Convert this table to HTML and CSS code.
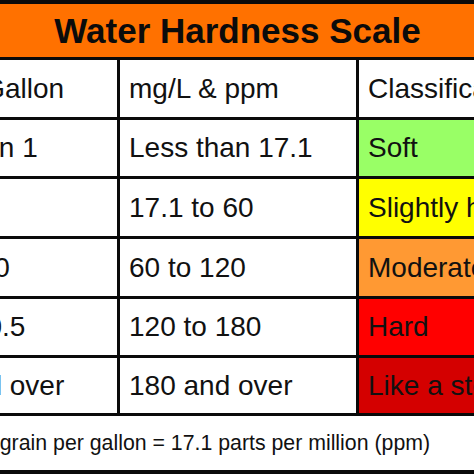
FILE: index.html
```html
<!DOCTYPE html>
<html lang="en">
<head>
<meta charset="UTF-8">
<meta name="viewport" content="width=device-width, initial-scale=1.0">
<title>Water Hardness Scale</title>
<link rel="stylesheet" href="styles.css">
</head>
<body>

<div class="sheet">
  <div class="title">Water Hardness Scale</div>

  <div class="cell first">Grains/Gallon</div>
  <div class="cell">mg/L &amp; ppm</div>
  <div class="cell">Classification</div>

  <div class="cell first">Less than 1</div>
  <div class="cell">Less than 17.1</div>
  <div class="cell soft">Soft</div>

  <div class="cell first">1 to 3.5</div>
  <div class="cell">17.1 to 60</div>
  <div class="cell slight">Slightly hard</div>

  <div class="cell first">3.5 to 7.0</div>
  <div class="cell">60 to 120</div>
  <div class="cell moderate">Moderately hard</div>

  <div class="cell first">7.0 to 10.5</div>
  <div class="cell">120 to 180</div>
  <div class="cell hard">Hard</div>

  <div class="cell first">10.5 and over</div>
  <div class="cell">180 and over</div>
  <div class="cell stone">Like a stone</div>

  <div class="note">1 grain per gallon = 17.1 parts per million (ppm)</div>
</div>

</body>
</html>
```

FILE: styles.css
```css
html, body {
  margin: 0;
  height: 100%;
  overflow: hidden;
  background: #fff;
}

body {
  font-family: "Liberation Sans", Arial, Helvetica, sans-serif;
  color: #000;
}

.sheet {
  display: grid;
  grid-template-columns: 237px 236px 236px;
  grid-template-rows: 53px 57px 56px 57px 57px 56px 55px 54px;
  gap: 3px;
  padding: 4px;
  margin-left: -124px;
  width: max-content;
  background: #0a0a0a;
}

.title {
  grid-column: 1 / -1;
  background: #ff7100;
  font-weight: bold;
  font-size: 35px;
  display: flex;
  align-items: center;
  justify-content: center;
  color: #0b0b0b;
}

.cell {
  background: #fff;
  font-size: 28px;
  display: flex;
  align-items: center;
  padding: 0 9px;
  white-space: nowrap;
  overflow: hidden;
  color: #111;
}

.first { padding-left: 13px; }

.soft { background: #99ff66; }
.slight { background: #ffff00; }
.moderate { background: #ff9933; }
.hard { background: #ff0000; }
.stone { background: #d40000; }

.note {
  grid-column: 1 / -1;
  background: #fff;
  font-size: 21.3px;
  display: flex;
  align-items: center;
  padding-left: 102px;
  white-space: nowrap;
  color: #111;
}
```
